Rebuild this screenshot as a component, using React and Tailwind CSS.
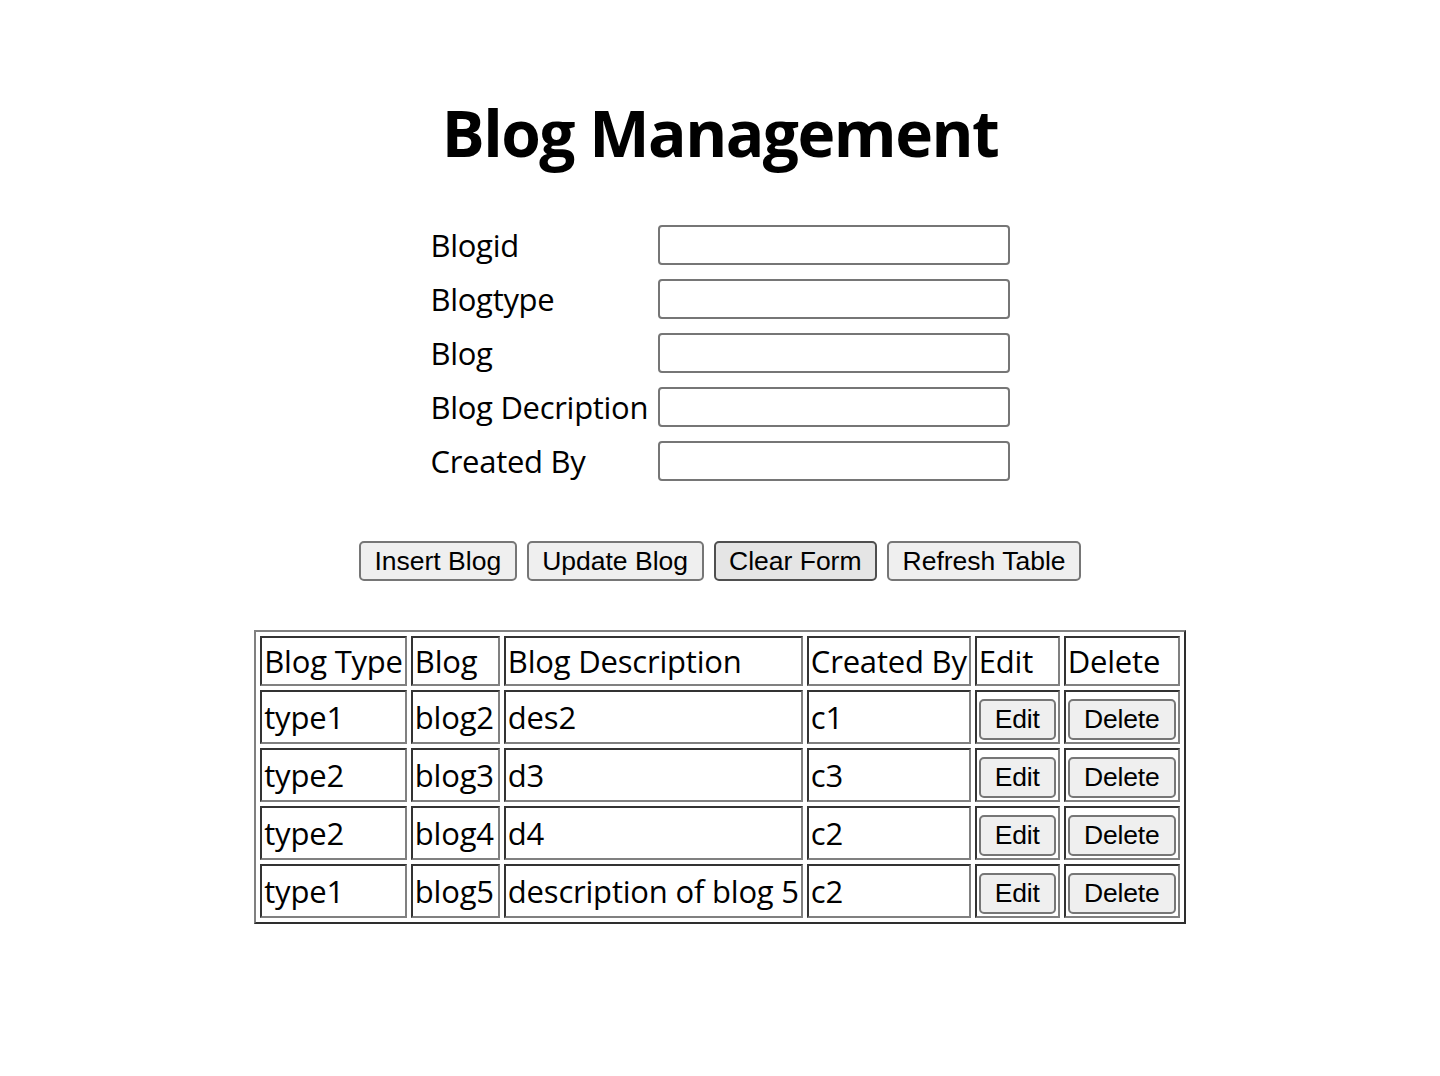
import React from "react";

const FIELDS = ["Blogid", "Blogtype", "Blog", "Blog Decription", "Created By"];
const ACTIONS = ["Insert Blog", "Update Blog", "Clear Form", "Refresh Table"];
const ROWS = [
  { type: "type1", blog: "blog2", desc: "des2", by: "c1" },
  { type: "type2", blog: "blog3", desc: "d3", by: "c3" },
  { type: "type2", blog: "blog4", desc: "d4", by: "c2" },
  { type: "type1", blog: "blog5", desc: "description of blog 5", by: "c2" },
];

const sans = "font-['Open_Sans','Noto_Sans',sans-serif]";
const arial = "font-['Liberation_Sans',Arial,sans-serif]";

// inset cell border like the browser default for <table border="1">
const cell =
  "whitespace-nowrap border-2 border-t-[#333] border-l-[#333] border-b-[#808080] border-r-[#808080] px-[2px] py-0 text-left font-normal align-middle";

function Btn({ children, active, className = "" }) {
  return (
    <button
      className={`${arial} rounded-[5px] border-2 px-[13.5px] text-[26.5px] text-black ${
        active ? "border-[#4f4f4f] bg-[#e5e5e5]" : "border-[#767676] bg-[#efefef]"
      } ${className}`}
    >
      {children}
    </button>
  );
}

export default function App() {
  return (
    <div className={`${sans} flex min-h-[1076px] flex-col items-center bg-white text-black`}>
      <h1 className="mt-[93px] text-[64px] font-bold leading-[80px] tracking-[-1.5px]">Blog Management</h1>

      <div className="mt-[52px] grid grid-cols-[227px_352px] gap-y-[14px]">
        {FIELDS.map((f) => (
          <React.Fragment key={f}>
            <label className="text-[31px] leading-[40px] tracking-[-0.3px]">{f}</label>
            <input className="h-[40px] w-[352px] rounded-[4px] border-2 border-[#767676] bg-white" />
          </React.Fragment>
        ))}
      </div>

      <div className="mt-[60px] flex gap-[10px]">
        {ACTIONS.map((a) => (
          <Btn key={a} active={a === "Clear Form"} className="leading-[36px]">
            {a}
          </Btn>
        ))}
      </div>

      <table className="mt-[49px] border-separate border-spacing-[4px] border-2 border-t-[#808080] border-l-[#808080] border-b-[#2e2e2e] border-r-[#2e2e2e] text-[31px] leading-[42px] tracking-[-0.2px]">
        <thead>
          <tr className="h-[50px]">
            <th className={`${cell} w-[145px]`}>Blog Type</th>
            <th className={`${cell} w-[89px]`}>Blog</th>
            <th className={`${cell} w-[299px]`}>Blog Description</th>
            <th className={`${cell} w-[161px]`}>Created By</th>
            <th className={`${cell} w-[85px]`}>Edit</th>
            <th className={`${cell} w-[116px]`}>Delete</th>
          </tr>
        </thead>
        <tbody>
          {ROWS.map((r) => (
            <tr key={r.blog} className="h-[54px]">
              <td className={cell}>{r.type}</td>
              <td className={cell}>{r.blog}</td>
              <td className={cell}>{r.desc}</td>
              <td className={cell}>{r.by}</td>
              <td className={cell}>
                <Btn className="w-full leading-[37px]">Edit</Btn>
              </td>
              <td className={cell}>
                <Btn className="w-full leading-[37px]">Delete</Btn>
              </td>
            </tr>
          ))}
        </tbody>
      </table>
    </div>
  );
}
